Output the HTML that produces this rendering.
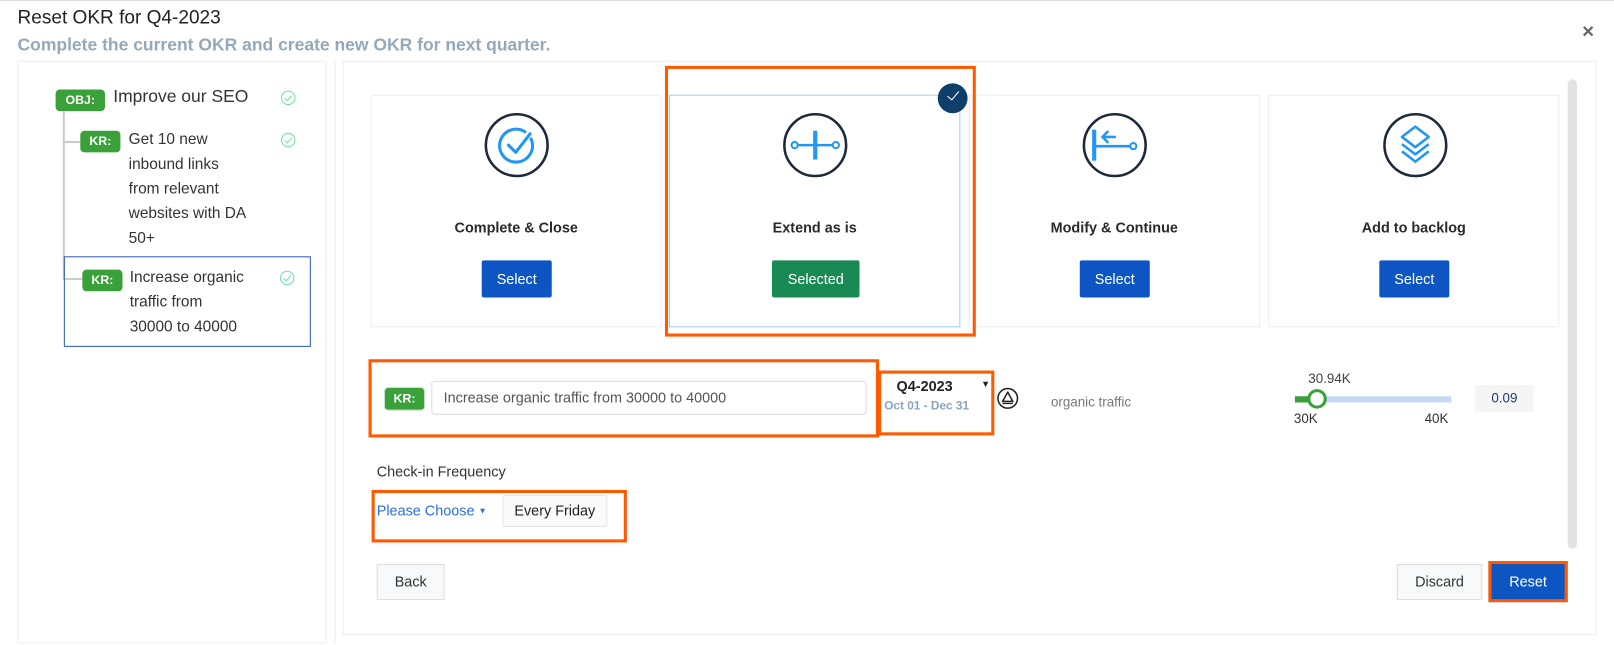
<!DOCTYPE html>
<html><head><meta charset="utf-8"><style>
html,body{margin:0;padding:0;background:#fff;overflow:hidden;width:1614px;height:645px}
#w{position:absolute;left:0;top:0;width:1568px;height:627px;transform:scale(1.02934);transform-origin:0 0;font-family:"Liberation Sans",sans-serif;color:#222}
.a{position:absolute}
.badge{position:absolute;background:#3aa13a;color:#fff;font-weight:bold;font-size:12px;border-radius:4px;text-align:center;line-height:21px;height:21px}
.card{position:absolute;top:92px;width:283px;height:226px;border:1px solid #eee;box-sizing:border-box}
.card .lbl{position:absolute;top:120px;width:100%;text-align:center;font-size:14px;font-weight:bold;color:#2a2a2a}
.card svg{position:absolute}
.btn{position:absolute;top:160px;height:36px;line-height:36px;color:#fff;font-size:14px;text-align:center;border-radius:2px}
.sel{background:#0d55c2;width:68px;left:107px}
.orange{position:absolute;border:3px solid #ff5a00;box-sizing:border-box}
.ck{position:absolute;width:14px;height:14px;border:1.3px solid #6fe0a0;border-radius:50%;box-sizing:border-box}
.ck:after{content:"";position:absolute;left:3.5px;top:2px;width:3px;height:6px;border:solid #6fe0a0;border-width:0 1.3px 1.3px 0;transform:rotate(40deg)}
.t{position:absolute;font-size:15px;line-height:24px;color:#333}
</style></head><body><div id="w">
<div class="a" style="left:0;top:0;width:1568px;height:1px;background:#ddd"></div>
<div class="a" style="left:17px;top:6px;font-size:18.5px;color:#222">Reset OKR for Q4-2023</div>
<div class="a" style="left:17px;top:34px;font-size:17px;color:#93a9bb;font-weight:bold">Complete the current OKR and create new OKR for next quarter.</div>
<div class="a" style="left:1537px;top:20px;font-size:20px;color:#666;font-weight:bold">×</div>

<div class="a" style="left:17px;top:59px;width:300px;height:566px;border:1px solid #eee;box-sizing:border-box"></div>
<div class="a" style="left:325px;top:59px;width:1px;height:566px;background:#eee"></div>
<div class="a" style="left:333px;top:59px;width:1218px;height:558px;border:1px solid #eee;box-sizing:border-box"></div>
<div class="a" style="left:1523px;top:77px;width:9px;height:456px;background:#e2e2e2;border-radius:5px"></div>

<!-- tree -->
<div class="a" style="left:61px;top:108px;width:2px;height:162px;background:#ccc"></div>
<div class="a" style="left:61px;top:137px;width:17px;height:2px;background:#ccc"></div>
<div class="a" style="left:61px;top:270px;width:19px;height:2px;background:#ccc"></div>
<div class="badge" style="left:54px;top:87px;width:48px">OBJ:</div>
<div class="a" style="left:110px;top:84px;font-size:17px;color:#333">Improve our SEO</div>
<div class="ck" style="left:273px;top:88px"></div>
<div class="badge" style="left:78px;top:127px;width:39px">KR:</div>
<div class="t" style="left:125px;top:124px;width:140px">Get 10 new<br>inbound links<br>from relevant<br>websites with DA<br>50+</div>
<div class="ck" style="left:273px;top:129px"></div>
<div class="a" style="left:62px;top:249px;width:240px;height:88px;border:1px solid #2a5bb8;box-sizing:border-box"></div>
<div class="badge" style="left:80px;top:262px;width:39px">KR:</div>
<div class="t" style="left:126px;top:258px">Increase organic<br>traffic from<br>30000 to 40000</div>
<div class="ck" style="left:272px;top:263px"></div>

<!-- cards -->
<div class="card" style="left:360px">
<svg width="64" height="64" viewBox="0 0 64 64" style="top:16px;left:109px"><circle cx="32" cy="32" r="30" fill="none" stroke="#1e2a3a" stroke-width="2.5"/><path d="M46 26 A16 16 0 1 1 40 19" fill="none" stroke="#2196f3" stroke-width="3" stroke-linecap="round"/><path d="M24 32 L31 39 L45 21" fill="none" stroke="#2196f3" stroke-width="3" stroke-linecap="round" stroke-linejoin="round"/></svg>
<div class="lbl">Complete &amp; Close</div><div class="btn sel">Select</div></div>
<div class="card" style="left:650px;border-color:#a9cdea">
<svg width="64" height="64" viewBox="0 0 64 64" style="top:16px;left:109px"><circle cx="32" cy="32" r="30" fill="none" stroke="#1e2a3a" stroke-width="2.5"/><path d="M15 32 H49" stroke="#2196f3" stroke-width="2.5"/><circle cx="12" cy="32" r="3" fill="#fff" stroke="#2196f3" stroke-width="2"/><circle cx="52" cy="32" r="3" fill="#fff" stroke="#2196f3" stroke-width="2"/><path d="M32 18 V46" stroke="#2196f3" stroke-width="4"/></svg>
<div class="lbl">Extend as is</div><div class="btn" style="background:#1a8a55;width:85px;left:99px">Selected</div></div>
<div class="card" style="left:941px">
<svg width="64" height="64" viewBox="0 0 64 64" style="top:16px;left:109px"><circle cx="32" cy="32" r="30" fill="none" stroke="#1e2a3a" stroke-width="2.5"/><path d="M12 17 V47" stroke="#2196f3" stroke-width="4"/><path d="M12 33 H47" stroke="#2196f3" stroke-width="2.5"/><circle cx="50" cy="33" r="3" fill="#fff" stroke="#2196f3" stroke-width="2"/><path d="M32 24 H20 M25 19 L20 24 L25 29" fill="none" stroke="#2196f3" stroke-width="2.5" stroke-linecap="round" stroke-linejoin="round"/></svg>
<div class="lbl">Modify &amp; Continue</div><div class="btn sel">Select</div></div>
<div class="card" style="left:1232px">
<svg width="64" height="64" viewBox="0 0 64 64" style="top:16px;left:110px"><circle cx="32" cy="32" r="30" fill="none" stroke="#1e2a3a" stroke-width="2.5"/><path d="M32 14 L45 24 L32 34 L19 24 Z" fill="none" stroke="#2196f3" stroke-width="2.5" stroke-linejoin="round"/><path d="M19 31 L32 41 L45 31 M19 38 L32 48 L45 38" fill="none" stroke="#2196f3" stroke-width="2.5" stroke-linejoin="round"/></svg>
<div class="lbl">Add to backlog</div><div class="btn sel">Select</div></div>
<div class="orange" style="left:646px;top:64px;width:302px;height:263px"></div>
<div class="a" style="left:911px;top:81px;width:29px;height:29px;border-radius:50%;background:#0f3e6b"></div>
<div class="a" style="left:923px;top:86px;width:5px;height:10px;border:solid #fff;border-width:0 1.5px 1.5px 0;transform:rotate(40deg)"></div>

<!-- KR row -->
<div class="badge" style="left:373px;top:376px;width:38px;border:1px solid #c9e8c9">KR:</div>
<div class="a" style="left:419px;top:370px;width:423px;height:33px;border:1px solid #ddd;border-radius:3px;box-sizing:border-box;font-size:14px;color:#555;line-height:31px;padding-left:11px">Increase organic traffic from 30000 to 40000</div>
<div class="orange" style="left:358px;top:349px;width:496px;height:76px"></div>
<div class="a" style="left:871px;top:367px;font-size:14px;font-weight:bold;color:#222">Q4-2023</div>
<div class="a" style="left:953px;top:368px;font-size:9px;color:#222">▼</div>
<div class="a" style="left:859px;top:389px;font-size:11.5px;color:#8aa4c0;font-weight:bold">Oct 01 - Dec 31</div>
<div class="orange" style="left:853px;top:360px;width:113px;height:63px"></div>
<svg class="a" style="left:968px;top:376px" width="22" height="22" viewBox="0 0 22 22"><circle cx="11" cy="11" r="9.5" fill="none" stroke="#222" stroke-width="1.5"/><path d="M11 5 L16 14 H6 Z" fill="none" stroke="#222" stroke-width="1.5" stroke-linejoin="round"/><path d="M6 16 H16" stroke="#222" stroke-width="1.3"/></svg>
<div class="a" style="left:1021px;top:383px;font-size:13px;color:#777">organic traffic</div>
<div class="a" style="left:1271px;top:360px;font-size:13px;color:#444">30.94K</div>
<div class="a" style="left:1258px;top:385px;width:152px;height:6px;background:#c5d9f2"></div>
<div class="a" style="left:1258px;top:385px;width:22px;height:6px;background:#3aa13a"></div>
<div class="a" style="left:1270px;top:378px;width:19px;height:19px;border-radius:50%;border:3px solid #3aa13a;background:#fff;box-sizing:border-box"></div>
<div class="a" style="left:1257px;top:399px;font-size:13px;color:#333">30K</div>
<div class="a" style="left:1384px;top:399px;font-size:13px;color:#333">40K</div>
<div class="a" style="left:1433px;top:374px;width:57px;height:26px;background:#f5f5f5;font-size:13px;color:#1c3d6e;line-height:26px;text-align:center">0.09</div>

<div class="a" style="left:366px;top:450px;font-size:14px;color:#333">Check-in Frequency</div>
<div class="a" style="left:366px;top:488px;font-size:14px;color:#2c6fd6">Please Choose <span style="font-size:8px;vertical-align:2px">▼</span></div>
<div class="a" style="left:488px;top:481px;width:102px;height:31px;border:1px solid #e5e5e5;background:#fafafa;box-sizing:border-box;font-size:14px;line-height:29px;text-align:center;border-radius:2px;color:#222">Every Friday</div>
<div class="orange" style="left:361px;top:476px;width:248px;height:51px"></div>

<div class="a" style="left:366px;top:548px;width:66px;height:35px;border:1px solid #ddd;background:#f8f9fb;box-sizing:border-box;font-size:14px;line-height:33px;text-align:center;color:#333">Back</div>
<div class="a" style="left:1357px;top:548px;width:83px;height:35px;border:1px solid #ddd;background:#f8f9fb;box-sizing:border-box;font-size:14px;line-height:33px;text-align:center;color:#333">Discard</div>
<div class="a" style="left:1446px;top:545px;width:77px;height:40px;border:3px solid #ff5a00;background:#0d55c2;box-sizing:border-box;font-size:14px;line-height:34px;text-align:center;color:#fff">Reset</div>
</div></body></html>
